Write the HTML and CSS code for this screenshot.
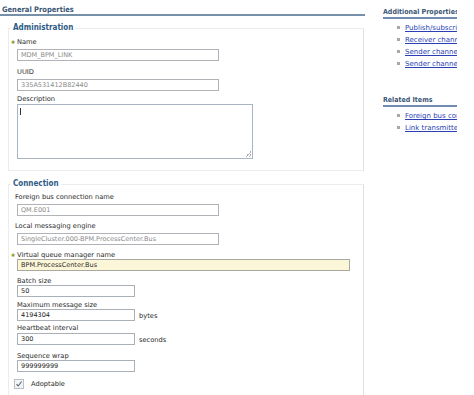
FILE: index.html
```html
<!DOCTYPE html>
<html>
<head>
<meta charset="utf-8">
<link rel="stylesheet" href="styles.css">
</head>
<body>
<div class="page">
  <div class="main">
    <div class="title">General Properties</div>
    <fieldset class="box admin">
      <legend>Administration</legend>
      <div class="field ro f-name">
        <div class="label"><span class="req">&#10033;</span>Name</div>
        <div class="input ro wide">MDM_BPM_LINK</div>
      </div>
      <div class="field ro f-uuid">
        <div class="label">UUID</div>
        <div class="input ro wide">335A531412B82440</div>
      </div>
      <div class="field f-desc">
        <div class="label">Description</div>
        <div class="textarea"><span class="caret"></span><span class="grip"></span></div>
      </div>
    </fieldset>
    <fieldset class="box conn">
      <legend>Connection</legend>
      <div class="field ro f-foreign">
        <div class="label shift">Foreign bus connection name</div>
        <div class="input ro wide">QM.E001</div>
      </div>
      <div class="field ro f-local">
        <div class="label shift">Local messaging engine</div>
        <div class="input ro wide">SingleCluster.000-BPM.ProcessCenter.Bus</div>
      </div>
      <div class="field f-virtual">
        <div class="label"><span class="req">&#10033;</span>Virtual queue manager name</div>
        <div class="input yellow">BPM.ProcessCenter.Bus</div>
      </div>
      <div class="field f-batch">
        <div class="label">Batch size</div>
        <div class="input small">50</div>
      </div>
      <div class="field f-max">
        <div class="label">Maximum message size</div>
        <div class="row"><div class="input small">4194304</div><span class="unit">bytes</span></div>
      </div>
      <div class="field f-heart">
        <div class="label">Heartbeat interval</div>
        <div class="row"><div class="input small">300</div><span class="unit">seconds</span></div>
      </div>
      <div class="field f-seq">
        <div class="label">Sequence wrap</div>
        <div class="input small">999999999</div>
      </div>
      <div class="check">
        <span class="cb"><svg width="8" height="8" viewBox="0 0 8 8"><path d="M1.5 4.2 L3.2 6 L6.6 1.5" fill="none" stroke="#5a6470" stroke-width="1.1"/></svg></span>
        <span class="cblabel">Adoptable</span>
      </div>
    </fieldset>
  </div>
  <div class="side">
    <div class="stitle">Additional Properties</div>
    <ul class="links">
      <li><a href="#">Publish/subscription broker profiles</a></li>
      <li><a href="#">Receiver channels</a></li>
      <li><a href="#">Sender channel</a></li>
      <li><a href="#">Sender channel transmission queue</a></li>
    </ul>
    <div class="stitle related">Related Items</div>
    <ul class="links">
      <li><a href="#">Foreign bus connections</a></li>
      <li><a href="#">Link transmitters</a></li>
    </ul>
  </div>
</div>
</body>
</html>
```

FILE: styles.css
```css
html, body {
  margin: 0;
  padding: 0;
  background: #ffffff;
}
body {
  font-family: "DejaVu Sans", Verdana, sans-serif;
  font-size: 6.7px;
  color: #2a2a2a;
}
.page {
  display: flex;
  align-items: flex-start;
  width: 474px;
  height: 395px;
  overflow: hidden;
}
.main {
  width: 365px;
  flex: none;
}
.title {
  font-family: "DejaVu Sans Condensed", "DejaVu Sans", sans-serif;
  font-weight: bold;
  font-size: 7.5px;
  color: #3b5676;
  padding: 5px 0 0 2px;
  height: 9px;
  border-bottom: 2px solid #7790aa;
}
.box {
  margin: 0 0 0 8px;
  padding: 0;
  border: 1px solid #ececec;
  border-right-color: #e2e2e2;
  width: 356px;
  box-sizing: border-box;
}
.box legend {
  font-family: "DejaVu Sans Condensed", "DejaVu Sans", sans-serif;
  font-weight: bold;
  font-size: 8px;
  color: #2d5b86;
  padding: 0 2px;
  margin-left: 2px;
  line-height: 10px;
}
.admin {
  margin-top: 7px;
  height: 148px;
}
.conn {
  margin-top: 8px;
  height: 230px;
}
.field {
  display: flex;
  flex-direction: column;
  align-items: flex-start;
  gap: 0;
  padding-left: 8px;
}
.field.ro {
  gap: 3px;
}
.label {
  position: relative;
  line-height: 7px;
  height: 7px;
  white-space: nowrap;
}
.label.shift {
  margin-left: -2px;
}
.req {
  position: absolute;
  left: -6px;
  top: 0;
  font-size: 5px;
  color: #8f9a2c;
}
.input {
  height: 12px;
  box-sizing: border-box;
  border: 1px solid #a9b0b8;
  padding: 0 3px;
  line-height: 10px;
  font-size: 6.5px;
  white-space: nowrap;
  overflow: hidden;
  background: #fff;
}
.input.ro {
  color: #8a8a8a;
  border-color: #b0b4b8;
}
.input.wide {
  width: 202px;
}
.input.small {
  width: 118px;
  color: #222;
}
.input.yellow {
  width: 333px;
  background: #fcf6d8;
  color: #2a2a2a;
  border-color: #a8a8a0;
}
.row {
  display: flex;
  align-items: center;
}
.unit {
  margin-left: 4px;
  margin-top: 1px;
}
.textarea {
  position: relative;
  width: 236px;
  height: 55px;
  box-sizing: border-box;
  border: 1px solid #a9b5c2;
}
.caret {
  position: absolute;
  left: 2px;
  top: 3px;
  width: 1px;
  height: 7px;
  background: #333;
}
.grip {
  position: absolute;
  right: 1px;
  bottom: 1px;
  width: 6px;
  height: 6px;
  background:
    linear-gradient(135deg, transparent 50%, #aab 50%, #aab 60%, transparent 60%, transparent 75%, #aab 75%, #aab 85%, transparent 85%);
}
.f-name { margin-top: 6px; }
.f-uuid { margin-top: 8px; }
.f-desc { margin-top: 5px; gap: 1px; }
.f-foreign { margin-top: 5px; }
.f-local { margin-top: 7px; }
.f-virtual { margin-top: 7px; }
.f-batch { margin-top: 7px; }
.f-max { margin-top: 5px; }
.f-heart { margin-top: 4px; gap: 1px; }
.f-seq { margin-top: 8px; }
.check {
  display: flex;
  align-items: center;
  margin-top: 7px;
  margin-left: 5px;
}
.cb {
  width: 8px;
  height: 8px;
  border: 1px solid #b8bec6;
  background: #f2f4f6;
  display: flex;
}
.cblabel {
  margin-left: 7px;
}
.side {
  margin-left: 18px;
  width: 74px;
  overflow: hidden;
  flex: none;
  white-space: nowrap;
}
.stitle {
  font-family: "DejaVu Sans Condensed", "DejaVu Sans", sans-serif;
  font-weight: bold;
  font-size: 7px;
  color: #3b5676;
  padding-top: 8px;
  height: 9px;
  border-bottom: 2px solid #6f8cb0;
}
.stitle.related {
  margin-top: 18px;
}
.links {
  list-style: none;
  margin: 3px 0 0 0;
  padding: 0 0 0 14px;
}
.links li {
  position: relative;
  height: 12px;
  line-height: 12px;
  padding-left: 8px;
}
.links li::before {
  content: "";
  position: absolute;
  left: 0;
  top: 4px;
  width: 3px;
  height: 3px;
  background: #a8a8a8;
}
.links a {
  color: #2a3fb4;
  text-decoration: underline;
  font-size: 7px;
}
```
